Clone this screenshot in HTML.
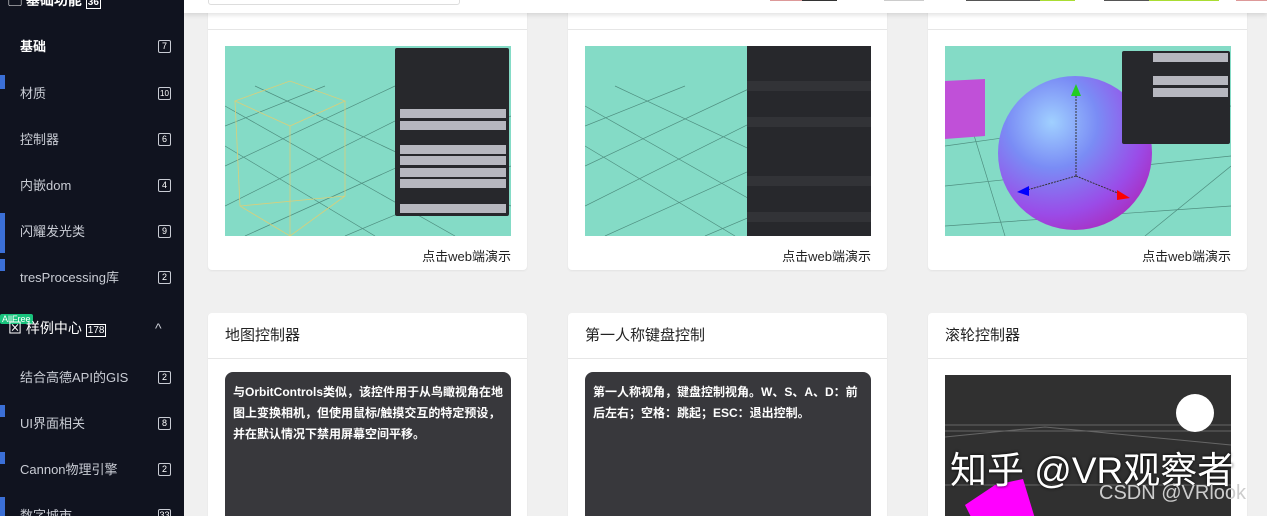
<!DOCTYPE html>
<html style="width:1267px;height:516px;overflow:hidden"><head><meta charset="utf-8"><style>
*{margin:0;padding:0;box-sizing:border-box}
body{width:1267px;height:516px;overflow:hidden;background:#f0f0f0;font-family:"Liberation Sans","Noto Sans CJK SC",sans-serif;position:relative}
.sb{position:absolute;left:0;top:0;width:184px;height:516px;background:#10131f;color:#c9ccd4;font-size:13px}
.it{position:absolute;left:20px;height:20px;line-height:20px}
.bd{position:absolute;left:158px;width:13px;height:13px;border:1px solid #c9ccd4;border-radius:2px;font-size:9px;line-height:11px;text-align:center;color:#fff}
.tag{position:absolute;left:0;width:5px;background:#3b6fd6}
.top{position:absolute;left:184px;top:0;width:1083px;height:13px;background:#fff;box-shadow:0 2px 5px rgba(0,0,0,.12);z-index:5}
.card{position:absolute;background:#fff;border-radius:4px;box-shadow:0 1px 2px rgba(0,0,0,.06);overflow:hidden}
.hd{position:absolute;left:0;right:0;border-bottom:1px solid #e6e6e6;font-size:15px;color:#222;padding-left:17px}
.lnk{position:absolute;right:16px;font-size:13px;color:#222}
.img{position:absolute;left:17px;width:286px;overflow:hidden}
.panel{position:absolute;background:#27282c;border-radius:2px}
.desc{position:absolute;left:17px;width:286px;height:160px;background:#38383c;border-radius:8px;color:#fff;font-size:12px;font-weight:bold;line-height:21px;padding:10px 8px}
.row{position:absolute;height:1px;background:#3c3d42}
</style></head><body>
<div class="sb">
  <div class="it" style="top:-10px;left:8px;color:#fff;font-weight:bold;font-size:14px">▢ 基础功能 <span style="font-size:10px;border:1px solid #fff;padding:0 1px">36</span></div>
  <div class="it" style="top:37px;color:#fff;font-weight:bold">基础</div><div class="bd" style="top:40px">7</div>
  <div class="tag" style="top:75px;height:14px"></div>
  <div class="it" style="top:84px">材质</div><div class="bd" style="top:87px;font-size:8px">10</div>
  <div class="it" style="top:130px">控制器</div><div class="bd" style="top:133px">6</div>
  <div class="it" style="top:176px">内嵌dom</div><div class="bd" style="top:179px">4</div>
  <div class="tag" style="top:213px;height:40px"></div>
  <div class="it" style="top:222px">闪耀发光类</div><div class="bd" style="top:225px">9</div>
  <div class="tag" style="top:259px;height:12px"></div>
  <div class="it" style="top:268px">tresProcessing库</div><div class="bd" style="top:271px">2</div>
  <div style="position:absolute;left:0;top:314px;background:#19c37d;color:#fff;font-size:9px;padding:0 2px;border-radius:2px">AllFree</div>
  <div class="it" style="top:318px;left:8px;color:#fff;font-size:14px">⊠ 样例中心 <span style="font-size:10px;border:1px solid #fff;padding:0 1px">178</span></div>
  <div class="it" style="top:318px;left:155px;font-size:14px">^</div>
  <div class="it" style="top:368px">结合高德API的GIS</div><div class="bd" style="top:371px">2</div>
  <div class="tag" style="top:405px;height:12px"></div>
  <div class="it" style="top:414px">UI界面相关</div><div class="bd" style="top:417px">8</div>
  <div class="tag" style="top:452px;height:12px"></div>
  <div class="it" style="top:460px">Cannon物理引擎</div><div class="bd" style="top:463px">2</div>
  <div class="tag" style="top:497px;height:19px"></div>
  <div class="it" style="top:506px">数字城市</div><div class="bd" style="top:509px">33</div>
</div>
<div class="top">
  <div style="position:absolute;left:24px;top:-4px;width:252px;height:9px;border:1px solid #ddd;border-radius:3px"></div>
  <div style="position:absolute;left:586px;top:0;width:32px;height:1px;background:#d99"></div>
  <div style="position:absolute;left:618px;top:0;width:35px;height:1px;background:#333"></div>
  <div style="position:absolute;left:700px;top:0;width:40px;height:1px;background:#ccc"></div>
  <div style="position:absolute;left:782px;top:0;width:74px;height:1px;background:#555"></div>
  <div style="position:absolute;left:856px;top:0;width:35px;height:1px;background:#ad3"></div>
  <div style="position:absolute;left:920px;top:0;width:45px;height:1px;background:#555"></div>
  <div style="position:absolute;left:965px;top:0;width:70px;height:1px;background:#ad3"></div>
  <div style="position:absolute;left:1052px;top:0;width:31px;height:1px;background:#d99"></div>
</div>

<!-- row 1 -->
<div class="card" style="left:208px;top:-20px;width:319px;height:290px">
  <div class="hd" style="top:0;height:50px"></div>
  <div class="img" style="top:66px;height:190px;background:#84dbc6">
    <svg width="286" height="190" style="position:absolute;left:0;top:0"><g stroke="#4f8f80" stroke-width=".7" fill="none"><path d="M0 120L170 40M0 160L220 50M20 190L286 70M120 190L286 120M0 80L100 40M30 40L286 160M0 60L230 190M0 100L150 190"/></g><g stroke="#d9cf7a" stroke-width=".8" fill="none"><path d="M10 55L65 35L120 55L65 80ZM10 55L15 160L65 190L120 150L120 55M65 80L65 190M15 160L120 150"/></g></svg>
    <div class="panel" style="left:170px;top:2px;width:114px;height:168px"></div>
    <div style="position:absolute;left:175px;top:63px;width:106px;height:9px;background:#b6b7bf"></div>
    <div style="position:absolute;left:175px;top:75px;width:106px;height:9px;background:#b6b7bf"></div>
    <div style="position:absolute;left:175px;top:99px;width:106px;height:9px;background:#b6b7bf"></div>
    <div style="position:absolute;left:175px;top:110px;width:106px;height:9px;background:#b6b7bf"></div>
    <div style="position:absolute;left:175px;top:122px;width:106px;height:9px;background:#b6b7bf"></div>
    <div style="position:absolute;left:175px;top:133px;width:106px;height:9px;background:#b6b7bf"></div>
    <div style="position:absolute;left:175px;top:158px;width:106px;height:9px;background:#b6b7bf"></div>
  </div>
  <div class="lnk" style="top:266px">点击web端演示</div>
</div>
<div class="card" style="left:568px;top:-20px;width:319px;height:290px">
  <div class="hd" style="top:0;height:50px"></div>
  <div class="img" style="top:66px;height:190px;background:#84dbc6">
    <svg width="286" height="190" style="position:absolute;left:0;top:0"><g stroke="#4f8f80" stroke-width=".7" fill="none"><path d="M0 120L170 40M0 160L220 50M20 190L286 70M120 190L286 120M0 80L100 40M30 40L286 160M0 60L230 190M0 100L150 190"/></g></svg>
    <div class="panel" style="left:162px;top:0;width:124px;height:190px;border-radius:0"></div>
    <div style="position:absolute;left:162px;top:35px;width:124px;height:10px;background:#323337"></div>
    <div style="position:absolute;left:162px;top:71px;width:124px;height:10px;background:#323337"></div>
    <div style="position:absolute;left:162px;top:130px;width:124px;height:10px;background:#323337"></div>
    <div style="position:absolute;left:162px;top:166px;width:124px;height:10px;background:#323337"></div>
  </div>
  <div class="lnk" style="top:266px">点击web端演示</div>
</div>
<div class="card" style="left:928px;top:-20px;width:319px;height:290px">
  <div class="hd" style="top:0;height:50px"></div>
  <div class="img" style="top:66px;height:190px;background:#84dbc6">
    <svg width="286" height="190" style="position:absolute;left:0;top:0"><defs><radialGradient id="g" cx=".35" cy=".3" r=".85"><stop offset="0" stop-color="#a0d0ff"/><stop offset=".35" stop-color="#7a8cf5"/><stop offset=".7" stop-color="#9a4ce8"/><stop offset="1" stop-color="#b020b0"/></radialGradient></defs><g stroke="#4f8f80" stroke-width=".7" fill="none"><path d="M0 100L286 60M0 140L286 110M0 180L286 160M60 190L20 60M200 190L286 120"/></g><polygon points="0,35 40,33 40,90 0,93" fill="#c050d8"/><circle cx="130" cy="107" r="77" fill="url(#g)"/><path d="M131 130V45M131 130L75 146M131 130L180 150" stroke="#333" stroke-width="1" stroke-dasharray="2 1"/><polygon points="131,38 126,50 136,50" fill="#2c2"/><polygon points="72,146 84,140 84,150" fill="#00f"/><polygon points="185,152 172,144 172,154" fill="#f00"/></svg>
    <div class="panel" style="left:177px;top:5px;width:108px;height:93px"></div>
    <div style="position:absolute;left:208px;top:7px;width:75px;height:9px;background:#b6b7bf"></div>
    <div style="position:absolute;left:208px;top:30px;width:75px;height:9px;background:#b6b7bf"></div>
    <div style="position:absolute;left:208px;top:42px;width:75px;height:9px;background:#b6b7bf"></div>
  </div>
  <div class="lnk" style="top:266px">点击web端演示</div>
</div>

<!-- row 2 -->
<div class="card" style="left:208px;top:313px;width:319px;height:203px;border-radius:4px 4px 0 0">
  <div class="hd" style="top:0;height:46px;line-height:46px">地图控制器</div>
  <div class="desc" style="top:59px">与OrbitControls类似，该控件用于从鸟瞰视角在地图上变换相机，但使用鼠标/触摸交互的特定预设，并在默认情况下禁用屏幕空间平移。</div>
</div>
<div class="card" style="left:568px;top:313px;width:319px;height:203px;border-radius:4px 4px 0 0">
  <div class="hd" style="top:0;height:46px;line-height:46px">第一人称键盘控制</div>
  <div class="desc" style="top:59px">第一人称视角，键盘控制视角。W、S、A、D：前后左右；空格：跳起；ESC：退出控制。</div>
</div>
<div class="card" style="left:928px;top:313px;width:319px;height:203px;border-radius:4px 4px 0 0">
  <div class="hd" style="top:0;height:46px;line-height:46px">滚轮控制器</div>
  <div class="img" style="top:62px;height:160px;background:#303030">
    <svg width="286" height="160" style="position:absolute;left:0;top:0"><g stroke="#666" stroke-width="1" fill="none"><path d="M0 50H286M0 56H286M0 62L100 52L286 70M0 110H286"/></g><circle cx="250" cy="38" r="19" fill="#fff"/><polygon points="20,130 50,110 78,104 95,160 35,160" fill="#f0f"/></svg>
  </div>
</div>
<div style="position:absolute;left:950px;top:440px;font-size:37px;color:#fff;text-shadow:0 0 3px #000">知乎 @VR观察者</div>
<div style="position:absolute;left:1099px;top:482px;font-size:20px;color:#ccc">CSDN @VRlook</div>
</body></html>
